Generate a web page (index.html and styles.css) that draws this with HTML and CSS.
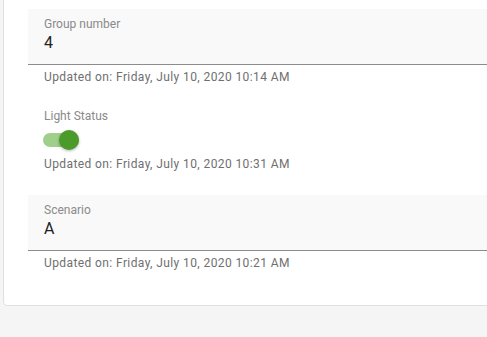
FILE: index.html
```html
<!DOCTYPE html>
<html lang="en">
<head>
    <meta charset="UTF-8">
    <title>Device Status</title>
    <link rel="stylesheet" href="styles.css">
</head>
<body>
    <div class="card">
        <div class="field">
            <div class="field-label">Group number</div>
            <div class="field-value">4</div>
        </div>
        <div class="hint">Updated on: Friday, July 10, 2020 10:14 AM</div>

        <div class="toggle-block">
            <div class="toggle-label">Light Status</div>
            <div class="toggle on">
                <div class="toggle-track"></div>
                <div class="toggle-thumb"></div>
            </div>
            <div class="hint">Updated on: Friday, July 10, 2020 10:31 AM</div>
        </div>

        <div class="field">
            <div class="field-label">Scenario</div>
            <div class="field-value">A</div>
        </div>
        <div class="hint">Updated on: Friday, July 10, 2020 10:21 AM</div>
    </div>
</body>
</html>
```

FILE: styles.css
```css
/* Device status card */
body {
    margin: 0;
    background-color: #f5f5f5;
    font-family: Roboto, "Noto Sans", sans-serif;
    overflow: hidden;
}
.card {
    width: 540px;
    margin: -20px 0 0 3px;
    padding: 28px 0 34px 24px;
    background-color: #fff;
    border: 1px solid #e0e0e0;
    border-radius: 4px;
}
.field {
    height: 56px;
    padding: 7px 16px 0;
    box-sizing: border-box;
    background-color: #f9f9f9;
    border-bottom: 1px solid #8c8c8c;
}
.field-label, .toggle-label {
    font-size: 12px;
    line-height: 16px;
    color: #8a8a8a;
}
.field-value {
    margin-top: -1px;
    font-size: 16px;
    line-height: 24px;
    color: #222;
}
.hint {
    margin-top: 4px;
    padding-left: 16px;
    font-size: 12px;
    line-height: 16px;
    letter-spacing: 0.4px;
    color: #6f6f6f;
}
.toggle-block {
    margin: 23px 0 23px;
}
.toggle-label {
    padding-left: 16px;
}
.toggle {
    position: relative;
    width: 36px;
    height: 20px;
    margin: 6px 0 6px 15px;
}
.toggle-block .hint {
    margin-top: 0;
}
.toggle-track {
    position: absolute;
    top: 3px;
    left: 0;
    width: 36px;
    height: 14px;
    border-radius: 7px;
    background-color: #9fcf8b;
}
.toggle-thumb {
    position: absolute;
    top: 0;
    left: 16px;
    width: 20px;
    height: 20px;
    border-radius: 50%;
    background-color: #4b9b2b;
    box-shadow: 0 1px 3px rgba(0, 0, 0, 0.3);
}
```
